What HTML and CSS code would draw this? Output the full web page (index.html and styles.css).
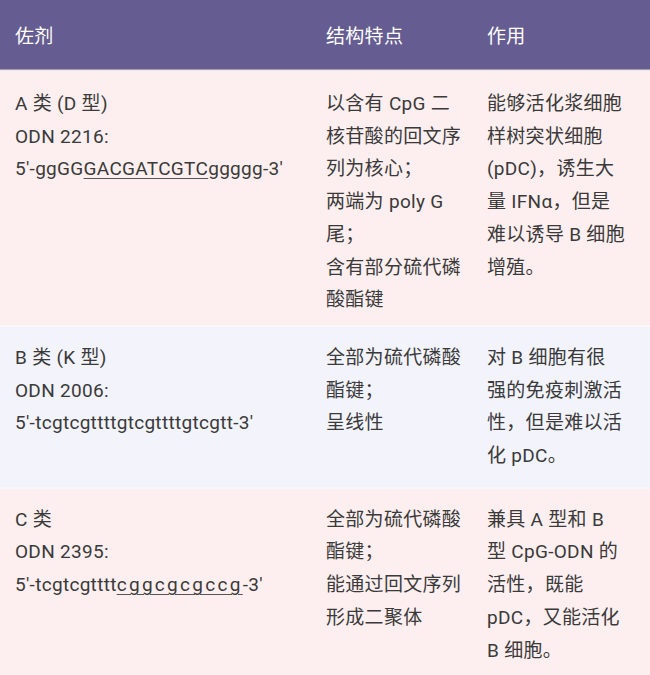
FILE: index.html
```html
<!DOCTYPE html>
<html lang="zh">
<head>
<meta charset="utf-8">
<link rel="stylesheet" href="styles.css">
</head>
<body>
<div class="table">
  <div class="row head">
    <div class="cell c1">佐剂</div>
    <div class="cell c2">结构特点</div>
    <div class="cell c3">作用</div>
  </div>
  <div class="row pink first">
    <div class="cell c1">A 类 (D 型)<br>ODN 2216:<br>5′-ggGG<span class="ul">GACGATCGTC</span>ggggg-3′</div>
    <div class="cell c2">以含有 CpG 二<br>核苷酸的回文序<br>列为核心；<br>两端为 poly G<br>尾；<br>含有部分硫代磷<br>酸酯键</div>
    <div class="cell c3">能够活化浆细胞<br>样树突状细胞<br>(pDC)，诱生大<br>量 IFNα，但是<br>难以诱导 B 细胞<br>增殖。</div>
  </div>
  <div class="row lav">
    <div class="cell c1">B 类 (K 型)<br>ODN 2006:<br>5′-tcgtcgttttgtcgttttgtcgtt-3′</div>
    <div class="cell c2">全部为硫代磷酸<br>酯键；<br>呈线性</div>
    <div class="cell c3">对 B 细胞有很<br>强的免疫刺激活<br>性，但是难以活<br>化 pDC。</div>
  </div>
  <div class="row pink">
    <div class="cell c1">C 类<br>ODN 2395:<br>5′-tcgtcgtttt<span class="ul wide">cggcgcgccg</span>-3′</div>
    <div class="cell c2">全部为硫代磷酸<br>酯键；<br>能通过回文序列<br>形成二聚体</div>
    <div class="cell c3">兼具 A 型和 B<br>型 CpG-ODN 的<br>活性，既能<br>pDC，又能活化<br>B 细胞。</div>
  </div>
</div>
</body>
</html>
```
FILE: styles.css
```css
html, body {
  margin: 0;
  padding: 0;
  background: #fbf6f8;
}
body {
  width: 650px;
  height: 675px;
  overflow: hidden;
  font-family: Roboto, "Noto Sans CJK SC", sans-serif;
  font-size: 19px;
  letter-spacing: 0.3px;
  color: #3a3a3a;
}
.table {
  display: flex;
  flex-direction: column;
  gap: 2px;
}
.row {
  display: grid;
  grid-template-columns: 310px 161px 1fr;
}
.cell {
  white-space: nowrap;
  line-height: 32.7px;
  padding: 15px 0 14px 15px;
}
.c2, .c3 {
  padding-left: 16px;
}
.first .cell {
  padding-top: 17px;
  padding-bottom: 8px;
}
.head {
  background: #655d91;
  color: #ffffff;
  height: 69px;
  align-items: center;
  box-shadow: 0 1px 1px rgba(60, 50, 90, 0.45);
}
.head .cell {
  padding-top: 5px;
  padding-bottom: 0;
}
.pink {
  background: #fdefef;
}
.lav {
  background: #f3f3fc;
}
.ul {
  text-decoration: underline;
  text-decoration-color: #555;
  text-decoration-thickness: 1px;
  text-underline-offset: 3px;
}
.wide {
  letter-spacing: 2.3px;
}
```
